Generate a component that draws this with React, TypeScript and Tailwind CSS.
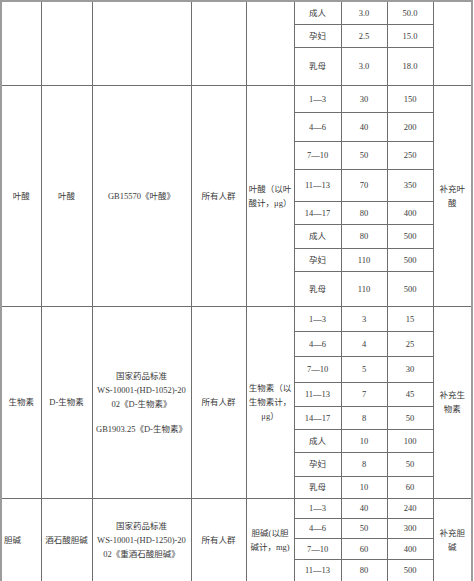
import React from "react";

type Row = { age: string; a: string; b: string; h: string };

const cell = "border border-[#6e6e6e] p-0 text-center align-middle";

const folic: Row[] = [
  { age: "1—3", a: "30", b: "150", h: "h-[27px]" },
  { age: "4—6", a: "40", b: "200", h: "h-[29px]" },
  { age: "7—10", a: "50", b: "250", h: "h-[28px]" },
  { age: "11—13", a: "70", b: "350", h: "h-[32px]" },
  { age: "14—17", a: "80", b: "400", h: "h-[23px]" },
  { age: "成人", a: "80", b: "500", h: "h-[24px]" },
  { age: "孕妇", a: "110", b: "500", h: "h-[23px]" },
  { age: "乳母", a: "110", b: "500", h: "h-[35px]" },
];

const biotin: Row[] = [
  { age: "1—3", a: "3", b: "15", h: "h-[25px]" },
  { age: "4—6", a: "4", b: "25", h: "h-[25px]" },
  { age: "7—10", a: "5", b: "30", h: "h-[26px]" },
  { age: "11—13", a: "7", b: "45", h: "h-[24px]" },
  { age: "14—17", a: "8", b: "50", h: "h-[23px]" },
  { age: "成人", a: "10", b: "100", h: "h-[23px]" },
  { age: "孕妇", a: "8", b: "50", h: "h-[24px]" },
  { age: "乳母", a: "10", b: "60", h: "h-[22px]" },
];

const choline: Row[] = [
  { age: "1—3", a: "40", b: "240", h: "h-[20px]" },
  { age: "4—6", a: "50", b: "300", h: "h-[20px]" },
  { age: "7—10", a: "60", b: "400", h: "h-[21px]" },
  { age: "11—13", a: "80", b: "500", h: "h-[23px]" },
];

function Values({ r }: { r: Row }) {
  return (
    <>
      <td className={cell}>{r.age}</td>
      <td className={cell}>{r.a}</td>
      <td className={cell}>{r.b}</td>
    </>
  );
}

function Section({
  rows,
  left,
  last,
}: {
  rows: Row[];
  left: React.ReactNode[];
  last: React.ReactNode;
}) {
  return (
    <>
      {rows.map((r, i) => (
        <tr key={i} className={r.h}>
          {i === 0 &&
            left.map((c, j) => (
              <td key={j} rowSpan={rows.length} className={cell}>
                {c}
              </td>
            ))}
          <Values r={r} />
          {i === 0 && (
            <td rowSpan={rows.length} className={cell}>
              {last}
            </td>
          )}
        </tr>
      ))}
    </>
  );
}

export default function App() {
  const top: Row[] = [
    { age: "成人", a: "3.0", b: "50.0", h: "h-[23px]" },
    { age: "孕妇", a: "2.5", b: "15.0", h: "h-[23px]" },
    { age: "乳母", a: "3.0", b: "18.0", h: "h-[38px]" },
  ];

  return (
    <div className="h-[581px] w-[474px] overflow-hidden bg-white font-['Liberation_Serif','Noto_Sans_CJK_SC',serif] text-[8.5px] leading-[14px] text-[#3a3a3a]">
      <table className="w-[473px] table-fixed border-collapse border-2 border-[#9c9c9c]">
        <colgroup>
          <col className="w-[40px]" />
          <col className="w-[51px]" />
          <col className="w-[99px]" />
          <col className="w-[55px]" />
          <col className="w-[48px]" />
          <col className="w-[47px]" />
          <col className="w-[46px]" />
          <col className="w-[46px]" />
          <col className="w-[39px]" />
        </colgroup>
        <tbody>
          <Section rows={top} left={["", "", "", "", ""]} last="" />

          <Section
            rows={folic}
            left={[
              "叶酸",
              "叶酸",
              "GB15570《叶酸》",
              "所有人群",
              <>
                叶酸（以叶
                <br />
                酸计，μg）
              </>,
            ]}
            last={
              <>
                补充叶
                <br />
                酸
              </>
            }
          />

          <Section
            rows={biotin}
            left={[
              "生物素",
              "D-生物素",
              <div className="whitespace-nowrap">
                国家药品标准
                <br />
                WS-10001-(HD-1052)-20
                <br />
                02《D-生物素》
                <div className="mt-[11px]">GB1903.25《D-生物素》</div>
              </div>,
              "所有人群",
              <>
                生物素（以
                <br />
                生物素计，
                <br />
                μg）
              </>,
            ]}
            last={
              <>
                补充生
                <br />
                物素
              </>
            }
          />

          <Section
            rows={choline}
            left={[
              <div className="pl-[2px] text-left">胆碱</div>,
              "酒石酸胆碱",
              <div className="whitespace-nowrap">
                国家药品标准
                <br />
                WS-10001-(HD-1250)-20
                <br />
                02《重酒石酸胆碱》
              </div>,
              "所有人群",
              <>
                胆碱(以胆
                <br />
                碱计，mg)
              </>,
            ]}
            last={
              <>
                补充胆
                <br />
                碱
              </>
            }
          />
        </tbody>
      </table>
    </div>
  );
}
